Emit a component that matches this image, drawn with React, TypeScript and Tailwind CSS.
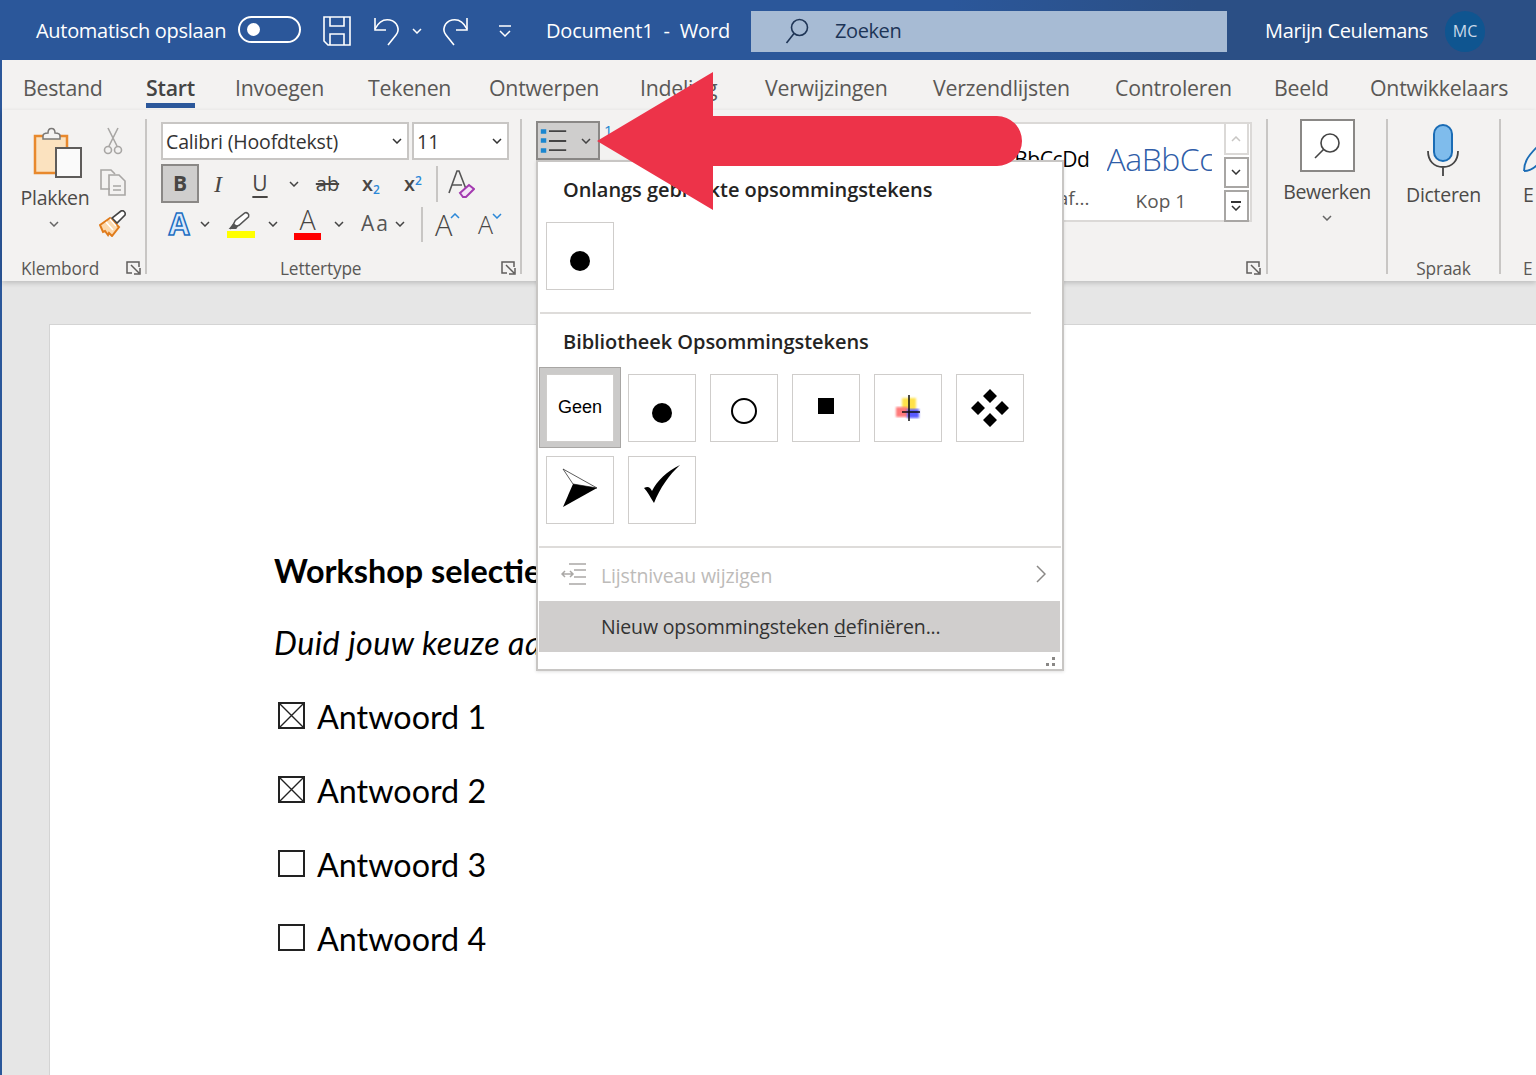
import type { ReactNode } from "react";

const UI = "font-['Open_Sans','Noto_Sans',sans-serif]";

const TABS = ["Bestand", "Start", "Invoegen", "Tekenen", "Ontwerpen", "Indeling", "Verwijzingen", "Verzendlijsten", "Controleren", "Beeld", "Ontwikkelaars"];
const ANSWERS = [
    { label: "Antwoord 1", checked: true },
    { label: "Antwoord 2", checked: true },
    { label: "Antwoord 3", checked: false },
    { label: "Antwoord 4", checked: false },
];

function Chevron({ color = "#444", className = "" }: { color?: string; className?: string }) {
    return (
        <svg width="10" height="6" viewBox="0 0 10 6" className={"shrink-0 " + className} fill="none" stroke={color} strokeWidth="1.5">
            <path d="M1 1l4 4 4-4" />
        </svg>
    );
}

function Launcher({ className = "" }: { className?: string }) {
    return (
        <svg width="15" height="15" viewBox="0 0 15 15" className={"shrink-0 " + className} fill="none" stroke="#605e5c" strokeWidth="1.5">
            <path d="M13 6V1H1v11h5" />
            <path d="M5 4l8 8M8 13h6V7" />
        </svg>
    );
}

function Sep({ className = "" }: { className?: string }) {
    return <div className={"w-[2px] shrink-0 bg-[#c8c6c4] " + className} />;
}

function TitleBar() {
    return (
        <div className={UI + " flex h-[60px] shrink-0 items-center bg-[linear-gradient(90deg,#2b579a_0%,#2b579a_62%,#2b4f85_78%,#2b4f85_100%)] pl-[36px] pt-[2px] text-white"}>
            <span className="w-[190px] text-[20px] tracking-[-0.3px] whitespace-nowrap">Automatisch opslaan</span>
            <div className="ml-[12px] -mt-[4px] flex h-[27px] w-[63px] items-center rounded-full border-2 border-white pl-[7px]">
                <div className="h-[13px] w-[13px] rounded-full bg-white" />
            </div>
            <svg width="28" height="30" viewBox="0 0 28 30" className="ml-[22px]" fill="none" stroke="#fff" strokeWidth="1.6">
                <path d="M1 1h26v28H5l-4-4z" />
                <path d="M7 1v9h14V1M7 29V18h14v11" />
            </svg>
            <svg width="28" height="30" viewBox="0 0 28 30" className="ml-[22px]" fill="none" stroke="#fff" strokeWidth="1.6">
                <path d="M2 2v12h11" />
                <path d="M2 13C6 5 12 3 17 4c8 2 10 10 6 15l-8 10" />
            </svg>
            <Chevron color="#fff" className="ml-[11px]" />
            <svg width="28" height="30" viewBox="0 0 28 30" className="ml-[19px]" fill="none" stroke="#fff" strokeWidth="1.6">
                <path d="M26 2v12H15" />
                <path d="M26 13C22 5 16 3 11 4 3 6 1 14 5 19l8 10" />
            </svg>
            <svg width="14" height="14" viewBox="0 0 14 14" className="ml-[29px]" fill="none" stroke="#fff" strokeWidth="1.5">
                <path d="M1 2h12M2 7l5 5 5-5" />
            </svg>
            <span className="ml-[34px] w-[205px] text-[20px] tracking-[-0.17px] whitespace-pre">Document1  -  Word</span>
            <div className="flex h-[41px] w-[476px] items-center bg-[#a7bbd4] pl-[34px] text-[#1d3557]">
                <svg width="24" height="26" viewBox="0 0 24 26" fill="none" stroke="#1f3556" strokeWidth="1.6">
                    <circle cx="14.5" cy="9.5" r="8" />
                    <path d="M9 15.5L1.5 25" />
                </svg>
                <span className="ml-[26px] text-[20px] tracking-[-0.4px]">Zoeken</span>
            </div>
            <span className="ml-[38px] w-[170px] text-[20px] tracking-[-0.35px] whitespace-nowrap">Marijn Ceulemans</span>
            <div className="ml-[10px] flex h-[41px] w-[40px] shrink-0 items-center justify-center rounded-full bg-[#0f5590] text-[16px] text-[#c9d8e8]">MC</div>
        </div>
    );
}

function Tabs() {
    return (
        <div className={UI + " grid h-[50px] shrink-0 grid-cols-[123px_89px_133px_121px_151px_125px_168px_182px_159px_96px_140px] bg-[#f3f2f1] pl-[21px] text-[21.3px] tracking-[-0.25px] text-[#5a5856]"}>
            {TABS.map((t) => (
                <div key={t} className={"flex h-[48px] w-fit flex-col justify-center whitespace-nowrap border-b-[5px] " + (t === "Start" ? "border-[#2b579a] font-semibold text-[#444]" : "border-transparent")}>
                    <span className="pt-[13px]">{t}</span>
                </div>
            ))}
        </div>
    );
}

function Klembord() {
    return (
        <div className="flex w-[143px] shrink-0 flex-col">
            <div className="flex h-[148px] pt-[17px]">
                <div className="flex w-[97px] flex-col items-center pl-[6px]">
                    <svg width="50" height="52" viewBox="0 0 50 52" className="ml-[8px]" fill="none">
                        <path d="M2 9h32v37H2z" fill="#fbe2bf" stroke="#e8892d" strokeWidth="2.5" />
                        <path d="M10 9c0-3 4-3 5-3 0-6 7-6 7 0 2 0 5 0 5 3v3H10z" fill="#f3f2f1" stroke="#7a7876" strokeWidth="1.5" />
                        <path d="M23 21h25v29H23z" fill="#fafafa" stroke="#5e5c5a" strokeWidth="2" />
                    </svg>
                    <span className="ml-[3px] mt-[7px] text-[19.5px] leading-[24px] tracking-[-0.3px] text-[#4c4a48]">Plakken</span>
                    <Chevron color="#666" className="mt-[11px]" />
                </div>
                <div className="flex w-[28px] flex-col items-center">
                    <svg width="20" height="28" viewBox="0 0 20 28" fill="none" stroke="#a8a6a4" strokeWidth="1.6">
                        <path d="M5 1l9 18M15 1L6 19" />
                        <circle cx="5" cy="23" r="3.5" />
                        <circle cx="15" cy="23" r="3.5" />
                    </svg>
                    <svg width="28" height="28" viewBox="0 0 28 28" className="mt-[13px]" fill="none" stroke="#a8a6a4" strokeWidth="1.6">
                        <path d="M11 21H2V2h10l4 4" />
                        <path d="M10 7h10l6 6v14H10z" />
                        <path d="M14 18h8M14 22h8" />
                    </svg>
                    <svg width="28" height="27" viewBox="0 0 28 27" className="mt-[14px]" fill="none">
                        <path d="M1 15l10-7 9 9-7 9-3-3-1 2-3-4-2 1z" fill="#fcd9ae" stroke="#e07c1c" strokeWidth="2" />
                        <path d="M7 12l7 8M11 9l6 7" stroke="#fff" strokeWidth="1.5" />
                        <path d="M13 8l2 2 3 3 8-8c1-3-2-5-4-4z" fill="#fff" stroke="#444" strokeWidth="1.6" />
                    </svg>
                </div>
            </div>
            <div className="flex h-[20px] items-center pl-[19px]">
                <span className="mt-[2px] w-[105px] text-[17.3px] tracking-[-0.15px] text-[#5a5856]">Klembord</span>
                <Launcher />
            </div>
        </div>
    );
}

function Lettertype() {
    return (
        <div className="flex w-[373px] shrink-0 flex-col pl-[14px]">
            <div className="flex h-[148px] flex-col pt-[12px]">
                <div className="flex gap-[3px]">
                    <div className="flex h-[38px] w-[248px] items-center justify-between border-2 border-[#c8c6c4] bg-white pl-[3px] pr-[5px] text-[19.5px] tracking-[-0.15px] text-[#333]">
                        <span className="mt-[2px]">Calibri (Hoofdtekst)</span>
                        <Chevron color="#333" />
                    </div>
                    <div className="flex h-[38px] w-[97px] items-center justify-between border-2 border-[#c8c6c4] bg-white pl-[3px] pr-[5px] text-[19.5px] text-[#333]">
                        <span className="mt-[2px]">11</span>
                        <Chevron color="#333" />
                    </div>
                </div>
                <div className="mt-[4px] flex h-[39px] items-center text-[#484644]">
                    <div className="flex h-[39px] w-[38px] items-center justify-center border-2 border-[#8a8886] bg-[#cfcecd] text-[21px] font-bold">B</div>
                    <span className="ml-[15px] w-[12px] font-['Liberation_Serif',serif] text-[24px] italic">I</span>
                    <span className="ml-[24px] w-[20px] text-center text-[21px] underline underline-offset-[5px]">U</span>
                    <Chevron className="ml-[19px]" />
                    <span className="ml-[15px] w-[27px] text-center text-[20px] leading-none line-through">ab</span>
                    <span className="ml-[21px] w-[20px] text-[20px] font-semibold">x<sub className="text-[12px] text-[#2b88d8]">2</sub></span>
                    <span className="ml-[22px] w-[19px] text-[20px] font-semibold">x<sup className="text-[12px] text-[#2b88d8]">2</sup></span>
                    <Sep className="ml-[13px] h-[36px]" />
                    <svg width="28" height="30" viewBox="0 0 28 30" className="ml-[9px]" fill="none">
                        <path d="M2 24L10 2h2l7 18M5 16h10" stroke="#555" strokeWidth="1.6" />
                        <path d="M13 24l9-8 5 4-8 8h-3z" fill="#f4e4f7" stroke="#a33ab0" strokeWidth="2" />
                    </svg>
                </div>
                <div className="mt-[3px] flex h-[36px] items-center text-[#484644]">
                    <span className="ml-[4px] w-[28px] text-center text-[30px] leading-none font-bold text-[#dbeafb] [-webkit-text-stroke:1.5px_#1b6ec2]">A</span>
                    <Chevron className="ml-[7px]" />
                    <div className="ml-[17px] flex w-[28px] flex-col">
                        <svg width="28" height="19" viewBox="0 0 28 20" fill="none">
                            <path d="M4 18l4-8L18 2c2-1 5 1 4 4L12 15z" fill="#fff" stroke="#555" strokeWidth="1.6" />
                            <path d="M1 19l5-6 5 3-2 3z" fill="#555" />
                        </svg>
                        <div className="mt-[1px] h-[7px] bg-[#ffff00]" />
                    </div>
                    <Chevron className="ml-[13px]" />
                    <div className="ml-[16px] flex w-[27px] flex-col items-center">
                        <span className="h-[22px] text-[27px] leading-[22px] font-light">A</span>
                        <div className="mt-[2px] h-[7px] w-full bg-[#ff0000]" />
                    </div>
                    <Chevron className="ml-[13px]" />
                    <span className="ml-[17px] w-[28px] text-[21px] tracking-[2px] whitespace-nowrap text-[#555]">Aa</span>
                    <Chevron className="ml-[6px]" />
                    <Sep className="ml-[16px] h-[35px]" />
                    <div className="ml-[12px] flex w-[27px] items-start">
                        <span className="text-[29px] leading-none font-light">A</span>
                        <Chevron color="#2b88d8" className="mt-[3px] -ml-[2px] rotate-180" />
                    </div>
                    <div className="ml-[16px] flex w-[24px] items-start">
                        <span className="text-[25px] leading-none font-light">A</span>
                        <Chevron color="#2b88d8" className="mt-[1px] -ml-[1px]" />
                    </div>
                </div>
            </div>
            <div className="flex h-[20px] items-center">
                <span className="ml-[119px] mt-[2px] w-[221px] text-[17.3px] tracking-[-0.15px] text-[#5a5856]">Lettertype</span>
                <Launcher />
            </div>
        </div>
    );
}

function Alinea() {
    return (
        <div className="flex w-[744px] shrink-0 flex-col">
            <div className="flex h-[148px] pt-[11px]">
                <div className="ml-[14px] flex h-[39px] w-[64px] items-center border-2 border-[#8a8886] bg-[#cfcecd] pl-[1px]">
                    <svg width="29" height="28" viewBox="0 0 32 30" fill="none">
                        <path d="M2 2h6v5H2zM2 12h6v5H2zM2 23h6v5H2z" fill="#1a86d0" />
                        <path d="M11 4h19M11 15h19M11 25h19" stroke="#444" strokeWidth="2" />
                    </svg>
                    <Chevron color="#444" className="ml-[13px]" />
                </div>
                <span className="ml-[4px] text-[15px] leading-[18px] text-[#1a86d0]">1</span>
                <div className="ml-[291px] mt-[1px] flex h-[100px] w-[348px] border-2 border-[#dbd9d7] bg-white">
                    <div className="flex w-[187px] flex-col items-end pr-[3px] pt-[21px]">
                        <span className="text-[21px] leading-[28px] tracking-[-0.4px] text-black whitespace-nowrap">AaBbCcDd</span>
                        <span className="mt-[13px] text-[19px] leading-[24px] text-[#5a5856] whitespace-nowrap">Geen af...</span>
                    </div>
                    <div className="flex w-[126px] flex-col overflow-hidden pl-[14px] pt-[14px]">
                        <span className="w-[105px] overflow-hidden text-[32px] leading-[42px] tracking-[-0.5px] whitespace-nowrap text-[#2f5da8] font-light">AaBbCc</span>
                        <span className="ml-[29px] mt-[9px] text-[19px] leading-[24px] text-[#5a5856]">Kop 1</span>
                    </div>
                    <div className="ml-[5px] flex w-[25px] flex-col gap-[2px] -my-[2px]">
                        <div className="flex h-[34px] items-center justify-center border-2 border-[#dbd9d7]"><Chevron color="#c8c6c4" className="rotate-180" /></div>
                        <div className="flex h-[31px] items-center justify-center border-2 border-[#a8a6a4]"><Chevron color="#333" /></div>
                        <div className="flex h-[33px] flex-col items-center justify-center gap-[2px] border-2 border-[#a8a6a4]">
                            <div className="h-[2px] w-[10px] bg-[#333]" />
                            <Chevron color="#333" />
                        </div>
                    </div>
                </div>
            </div>
            <div className="flex h-[20px] items-center justify-end pr-[5px]">
                <Launcher />
            </div>
        </div>
    );
}

function Bewerken() {
    return (
        <div className="flex w-[118px] shrink-0 flex-col items-center pt-[9px]">
            <div className="flex h-[53px] w-[55px] items-center justify-center border-2 border-[#8a8886] bg-white">
                <svg width="28" height="28" viewBox="0 0 28 28" fill="none" stroke="#444" strokeWidth="1.6">
                    <circle cx="17" cy="11" r="9" />
                    <path d="M10.5 17.5L2 26" />
                </svg>
            </div>
            <span className="mt-[8px] text-[19.5px] leading-[24px] tracking-[-0.4px] text-[#4c4a48]">Bewerken</span>
            <Chevron color="#666" className="mt-[11px]" />
        </div>
    );
}

function Spraak() {
    return (
        <div className="flex w-[111px] shrink-0 flex-col items-center pt-[14px]">
            <div className="flex h-[135px] flex-col items-center">
                <svg width="32" height="52" viewBox="0 0 32 52" fill="none">
                    <rect x="7" y="1" width="18" height="36" rx="9" fill="#7fbcec" stroke="#1a6cb5" strokeWidth="2" />
                    <path d="M1 27c0 10 6 16 15 16s15-6 15-16M16 43v9" stroke="#444" strokeWidth="1.8" />
                </svg>
                <span className="mt-[7px] text-[19.5px] leading-[24px] tracking-[-0.3px] text-[#4c4a48]">Dicteren</span>
            </div>
            <span className="text-[17.3px] leading-[20px] tracking-[-0.15px] text-[#5a5856]">Spraak</span>
        </div>
    );
}

function LastGroup() {
    return (
        <div className="flex flex-col overflow-hidden pl-[22px] pt-[32px]">
            <svg width="14" height="30" viewBox="0 0 14 30" fill="none" stroke="#1a6cb5" strokeWidth="1.8">
                <path d="M1 29c0-8 3-14 13-24M1 29c5 0 9-2 13-6" />
            </svg>
            <span className="mt-[11px] text-[19.5px] leading-[24px] text-[#4c4a48]">E</span>
            <span className="mt-[52px] text-[17.3px] leading-[20px] text-[#5a5856]">E</span>
        </div>
    );
}

function Ribbon() {
    return (
        <div className={UI + " z-10 flex h-[171px] shrink-0 bg-[#f3f2f1] shadow-[0_2px_5px_rgba(0,0,0,0.18)]"}>
            <Klembord />
            <Sep className="mt-[9px] h-[155px]" />
            <Lettertype />
            <Sep className="mt-[9px] h-[155px]" />
            <Alinea />
            <Sep className="mt-[9px] h-[155px]" />
            <Bewerken />
            <Sep className="mt-[9px] h-[155px]" />
            <Spraak />
            <Sep className="mt-[9px] h-[155px]" />
            <LastGroup />
        </div>
    );
}

function Document() {
    return (
        <div className="flex-1 overflow-hidden bg-[#e6e6e6] pl-[47px] pt-[43px]">
            <div className="h-[800px] w-[1560px] border border-[#d4d4d4] bg-white pl-[224px] pt-[224px] font-['Lato','Carlito',sans-serif] text-[32.3px] text-black">
                <p className="h-[74px] leading-[44px] font-bold whitespace-nowrap">Workshop selectie</p>
                <p className="h-[76px] leading-[40px] italic tracking-[0.45px] whitespace-nowrap">Duid jouw keuze aan</p>
                {ANSWERS.map((a) => (
                    <div key={a.label} className="flex h-[74px] items-start">
                        <svg width="28" height="28" viewBox="0 0 28 28" className="ml-[4px] mt-[3px]" fill="none" stroke="#222" strokeWidth="1.4">
                            <rect x="1" y="1" width="25" height="25" strokeWidth="2" />
                            {a.checked && <path d="M1 1l25 25M26 1L1 26" />}
                        </svg>
                        <span className="ml-[11px] leading-[36px]">{a.label}</span>
                    </div>
                ))}
            </div>
        </div>
    );
}

function BulletCell({ children }: { children?: ReactNode }) {
    return <div className="flex h-[68px] w-[68px] shrink-0 items-center justify-center border-[1.5px] border-[#cfcdcb] bg-white">{children}</div>;
}

function Popover() {
    return (
        <div className={UI + " absolute left-[536px] top-[160px] z-20 flex h-[511px] w-[528px] flex-col border-2 border-[#c8c6c4] bg-white pt-[14px] shadow-[0_1px_3px_rgba(0,0,0,0.12)]"}>
            <p className="ml-[25px] text-[20px] leading-[28px] font-semibold tracking-[-0.05px] text-[#252423] whitespace-nowrap">Onlangs gebruikte opsommingstekens</p>
            <div className="ml-[8px] mt-[18px]">
                <BulletCell>
                    <div className="mt-[10px] h-[20px] w-[20px] rounded-full bg-black" />
                </BulletCell>
            </div>
            <div className="ml-[2px] mt-[22px] h-[2px] w-[491px] bg-[#dedcda]" />
            <p className="ml-[25px] mt-[14px] text-[20px] leading-[28px] font-semibold tracking-[-0.05px] text-[#252423] whitespace-nowrap">Bibliotheek Opsommingstekens</p>
            <div className="ml-[1px] mt-[11px] flex h-[81px] items-center">
                <div className="flex h-[81px] w-[82px] shrink-0 items-center justify-center border border-[#a8a6a4] bg-[#cbcac9]">
                    <div className="flex h-[68px] w-[68px] items-center justify-center border-[1.5px] border-[#cfcdcb] bg-white font-['Liberation_Sans',sans-serif] text-[18px] text-black">Geen</div>
                </div>
                <div className="ml-[7px] flex gap-[14px]">
                    <BulletCell><div className="mt-[10px] h-[20px] w-[20px] rounded-full bg-black" /></BulletCell>
                    <BulletCell><div className="mt-[6px] h-[26px] w-[26px] rounded-full border-2 border-black" /></BulletCell>
                    <BulletCell><div className="-mt-[4px] h-[16px] w-[16px] bg-black" /></BulletCell>
                    <BulletCell>
                        <svg width="28" height="28" viewBox="0 0 28 28">
                            <defs>
                                <filter id="bl"><feGaussianBlur stdDeviation="1" /></filter>
                            </defs>
                            <rect x="8" y="4" width="14" height="13" fill="#ffe24a" filter="url(#bl)" />
                            <rect x="2" y="13" width="12" height="10" fill="#ff7a7a" filter="url(#bl)" />
                            <rect x="13" y="15" width="12" height="9" fill="#5a5aff" filter="url(#bl)" />
                            <path d="M15 1v26M8 18h18" stroke="#111" strokeWidth="1.5" />
                        </svg>
                    </BulletCell>
                    <BulletCell>
                        <svg width="40" height="40" viewBox="0 0 40 40" fill="#000">
                            <path d="M20 1l7 7-7 7-7-7zM8 13l7 7-7 7-7-7zM32 13l7 7-7 7-7-7zM20 25l7 7-7 7-7-7z" />
                        </svg>
                    </BulletCell>
                </div>
            </div>
            <div className="ml-[8px] mt-[8px] flex gap-[14px]">
                <BulletCell>
                    <svg width="36" height="40" viewBox="0 0 36 40" className="-mt-[4px]">
                        <path d="M1 1l34 19-24-4z" fill="#fff" stroke="#333" strokeWidth="0.8" />
                        <path d="M1 39l10-23 24 4z" fill="#000" />
                    </svg>
                </BulletCell>
                <BulletCell>
                    <svg width="38" height="40" viewBox="0 0 38 40" className="-mt-[13px]">
                        <path d="M1 24c4-2 6-1 8 3C14 17 24 7 37 1 26 11 17 24 11 39c-4-6-6-11-10-15z" fill="#000" />
                    </svg>
                </BulletCell>
            </div>
            <div className="ml-[1px] mr-[1px] mt-[22px] h-[2px] bg-[#dedcda]" />
            <div className="mx-[1px] mt-[2px] flex h-[51px] items-center pl-[22px] pr-[15px] text-[19.5px] tracking-[-0.15px] text-[#bdbbb9]">
                <svg width="26" height="24" viewBox="0 0 26 24" fill="none" stroke="#aaa8a6" strokeWidth="1.5" className="-mt-[4px]">
                    <path d="M8 2h17M13 8h12M13 15h12M8 22h17M1 12h11M4 9l-3 3 3 3M9 9l3 3-3 3" />
                </svg>
                <span className="ml-[14px] flex-1">Lijstniveau wijzigen</span>
                <svg width="10" height="18" viewBox="0 0 10 18" fill="none" stroke="#8a8886" strokeWidth="1.5" className="-mt-[4px]">
                    <path d="M1 1l8 8-8 8" />
                </svg>
            </div>
            <div className="ml-[1px] mr-[2px] flex h-[51px] items-center bg-[#d0cecd] pl-[62px] text-[19.5px] tracking-[-0.15px] text-[#333]">
                <span>Nieuw opsommingsteken <span className="underline underline-offset-2">d</span>efiniëren...</span>
            </div>
            <div className="mr-[6px] mt-[5px] flex justify-end">
                <svg width="10" height="10" viewBox="0 0 10 10" fill="#8a8886">
                    <rect x="6" y="0" width="3" height="3" />
                    <rect x="6" y="6" width="3" height="3" />
                    <rect x="0" y="6" width="3" height="3" />
                </svg>
            </div>
        </div>
    );
}

function RedArrow() {
    return (
        <svg width="1030" height="215" viewBox="0 0 1030 215" className="absolute left-0 top-0 z-30 pointer-events-none">
            <path d="M597 141L713 72V116H997A25 25 0 0 1 997 166H713V210Z" fill="#ed3349" />
        </svg>
    );
}

export default function App() {
    return (
        <div className="relative flex h-[1075px] w-[1536px] flex-col overflow-hidden bg-[#2b579a]">
            <TitleBar />
            <div className="flex min-h-0 flex-1 flex-col pl-[2px]">
                <Tabs />
                <Ribbon />
                <Document />
            </div>
            <Popover />
            <RedArrow />
        </div>
    );
}
